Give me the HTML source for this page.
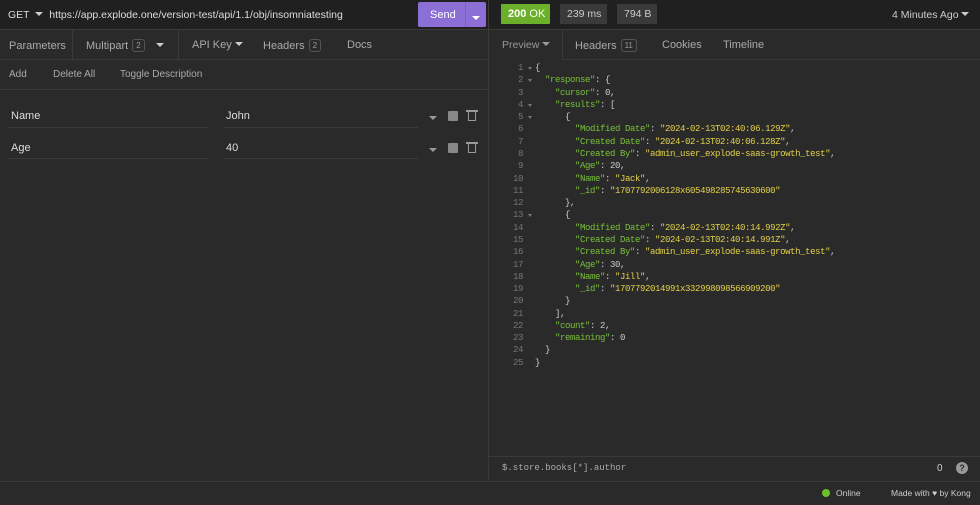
<!DOCTYPE html><html><head><style>
*{margin:0;padding:0;box-sizing:border-box}
body{width:980px;height:505px;background:#2a2a2a;font-family:"Liberation Sans",sans-serif;color:#bbb;position:relative;overflow:hidden;font-size:11px}
.a{position:absolute;white-space:nowrap}
.top{left:0;top:0;width:980px;height:30px;background:#202020;border-bottom:1px solid #3a3a3a}
.vl{position:absolute;background:#3a3a3a}
.badge{display:inline-block;border:1px solid #555;border-radius:3px;font-size:8px;padding:1px 3px;margin-left:4px;color:#999;vertical-align:1px}
.tri{display:inline-block;width:0;height:0;border-left:4px solid transparent;border-right:4px solid transparent;border-top:4px solid #ccc;vertical-align:2px}
pre{position:absolute;left:505px;top:62px;font-family:"Liberation Mono",monospace;font-size:9px;letter-spacing:-0.4px;line-height:12.28px;color:#ccc}
.n{color:#777;display:inline-block;width:18px;text-align:right;margin-right:12px;position:relative}
.f:after{content:"";position:absolute;right:-9px;top:5px;border-left:2.5px solid transparent;border-right:2.5px solid transparent;border-top:3px solid #777}
.k{color:#79c13b}.s{color:#e3d24a}
.chk{position:absolute;width:10px;height:10px;background:#888;border-radius:1px}
.trash{position:absolute;width:8px;height:9px;border:1.5px solid #999;border-top:none}
</style></head><body>
<div class="a top"></div>
<div class="a" style="left:8px;top:9px;font-size:10.5px;color:#ddd">GET <span class="tri" style="margin:0 3px"></span> https://app.explode.one/version-test/api/1.1/obj/insomniatesting</div>
<div class="a" style="left:418px;top:2px;width:68px;height:25px;background:#8b6fd6;border-radius:2px"></div>
<div class="a" style="left:430px;top:9px;color:#fff;font-size:11px">Send</div>
<div class="a" style="left:465px;top:2px;width:1px;height:25px;background:#7a5fc5"></div>
<div class="a" style="left:472px;top:13px"><span class="tri" style="border-top-color:#fff"></span></div>
<div class="vl" style="left:488px;top:0;width:1px;height:481px"></div>
<div class="a" style="left:501px;top:4px;width:49px;height:20px;background:#6caf2b;border-radius:1px;color:#fff;font-size:11px;padding:4px 0 0 7px"><b>200</b> OK</div>
<div class="a" style="left:560px;top:4px;width:47px;height:20px;background:#3a3a3a;color:#ccc;font-size:10.5px;padding:4px 0 0 7px">239 ms</div>
<div class="a" style="left:617px;top:4px;width:40px;height:20px;background:#3a3a3a;color:#ccc;font-size:10.5px;padding:4px 0 0 7px">794 B</div>
<div class="a" style="left:892px;top:9px;color:#ccc;font-size:10.5px">4 Minutes Ago <span class="tri"></span></div>
<div class="vl" style="left:0;top:59px;width:488px;height:1px"></div>
<div class="vl" style="left:72px;top:30px;width:1px;height:30px"></div>
<div class="vl" style="left:178px;top:30px;width:1px;height:30px"></div>
<div class="a" style="left:9px;top:40px;color:#aaa">Parameters</div>
<div class="a" style="left:86px;top:39px;color:#aaa">Multipart<span class="badge">2</span> <span class="tri" style="margin-left:8px"></span></div>
<div class="a" style="left:192px;top:39px;color:#aaa">API Key <span class="tri"></span></div>
<div class="a" style="left:263px;top:39px;color:#aaa">Headers<span class="badge">2</span></div>
<div class="a" style="left:347px;top:39px;color:#aaa">Docs</div>
<div class="a" style="left:9px;top:69px;color:#aaa;font-size:10px">Add</div>
<div class="a" style="left:53px;top:69px;color:#aaa;font-size:10px">Delete All</div>
<div class="a" style="left:120px;top:69px;color:#aaa;font-size:10px">Toggle Description</div>
<div class="vl" style="left:0;top:89px;width:488px;height:1px"></div>
<div class="a" style="left:11px;top:110px;color:#ddd">Name</div>
<div class="a" style="left:226px;top:110px;color:#ddd">John</div>
<div class="vl" style="left:9px;top:127px;width:199px;height:1px"></div>
<div class="vl" style="left:224px;top:127px;width:194px;height:1px"></div>
<div class="a" style="left:11px;top:142px;color:#ddd">Age</div>
<div class="a" style="left:226px;top:142px;color:#ddd">40</div>
<div class="vl" style="left:9px;top:158px;width:199px;height:1px"></div>
<div class="vl" style="left:224px;top:158px;width:194px;height:1px"></div>
<div class="a" style="left:429px;top:113px"><span class="tri" style="border-top-color:#999"></span></div>
<div class="a" style="left:429px;top:145px"><span class="tri" style="border-top-color:#999"></span></div>
<div class="chk" style="left:448px;top:111px"></div><div class="chk" style="left:448px;top:143px"></div>
<div class="trash" style="left:468px;top:112px"></div><div class="vl" style="left:466px;top:110px;width:12px;height:1.5px;background:#999"></div>
<div class="trash" style="left:468px;top:144px"></div><div class="vl" style="left:466px;top:142px;width:12px;height:1.5px;background:#999"></div>
<div class="vl" style="left:562px;top:30px;width:1px;height:30px"></div>
<div class="vl" style="left:562px;top:59px;width:418px;height:1px"></div>
<div class="a" style="left:502px;top:39px;color:#999;font-size:10.5px">Preview <span class="tri" style="border-top-color:#999"></span></div>
<div class="a" style="left:575px;top:39px;color:#aaa">Headers<span class="badge">11</span></div>
<div class="a" style="left:662px;top:39px;color:#aaa">Cookies</div>
<div class="a" style="left:723px;top:39px;color:#aaa">Timeline</div>
<pre><span class="n f">1</span>{
<span class="n f">2</span>  <span class="k">"response"</span>: {
<span class="n">3</span>    <span class="k">"cursor"</span>: 0,
<span class="n f">4</span>    <span class="k">"results"</span>: [
<span class="n f">5</span>      {
<span class="n">6</span>        <span class="k">"Modified Date"</span>: <span class="s">"2024-02-13T02:40:06.129Z"</span>,
<span class="n">7</span>        <span class="k">"Created Date"</span>: <span class="s">"2024-02-13T02:40:06.128Z"</span>,
<span class="n">8</span>        <span class="k">"Created By"</span>: <span class="s">"admin_user_explode-saas-growth_test"</span>,
<span class="n">9</span>        <span class="k">"Age"</span>: 20,
<span class="n">10</span>        <span class="k">"Name"</span>: <span class="s">"Jack"</span>,
<span class="n">11</span>        <span class="k">"_id"</span>: <span class="s">"1707792006128x605498285745630600"</span>
<span class="n">12</span>      },
<span class="n f">13</span>      {
<span class="n">14</span>        <span class="k">"Modified Date"</span>: <span class="s">"2024-02-13T02:40:14.992Z"</span>,
<span class="n">15</span>        <span class="k">"Created Date"</span>: <span class="s">"2024-02-13T02:40:14.991Z"</span>,
<span class="n">16</span>        <span class="k">"Created By"</span>: <span class="s">"admin_user_explode-saas-growth_test"</span>,
<span class="n">17</span>        <span class="k">"Age"</span>: 30,
<span class="n">18</span>        <span class="k">"Name"</span>: <span class="s">"Jill"</span>,
<span class="n">19</span>        <span class="k">"_id"</span>: <span class="s">"1707792014991x332998098566909200"</span>
<span class="n">20</span>      }
<span class="n">21</span>    ],
<span class="n">22</span>    <span class="k">"count"</span>: 2,
<span class="n">23</span>    <span class="k">"remaining"</span>: 0
<span class="n">24</span>  }
<span class="n">25</span>}</pre>
<div class="vl" style="left:489px;top:456px;width:491px;height:1px"></div>
<div class="a" style="left:502px;top:463px;font-family:'Liberation Mono',monospace;font-size:9px;color:#aaa">$.store.books[*].author</div>
<div class="a" style="left:937px;top:463px;color:#ccc;font-size:10px">0</div>
<div class="a" style="left:956px;top:462px;width:12px;height:12px;border-radius:50%;background:#999;color:#2a2a2a;font-size:9px;font-weight:bold;text-align:center;line-height:12px">?</div>
<div class="vl" style="left:0;top:481px;width:980px;height:1px"></div>
<div class="a" style="left:822px;top:489px;width:8px;height:8px;border-radius:50%;background:#6cc12a"></div>
<div class="a" style="left:836px;top:488px;font-size:8.5px;color:#ccc">Online</div>
<div class="a" style="left:891px;top:488px;font-size:8.5px;color:#ccc">Made with ♥ by Kong</div>
</body></html>
